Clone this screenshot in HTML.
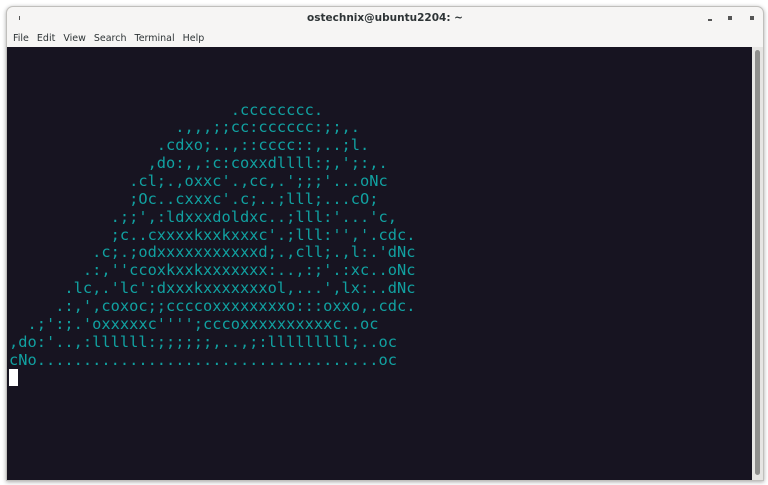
<!DOCTYPE html>
<html><head><meta charset="utf-8"><style>
html,body{margin:0;padding:0;}
body{width:768px;height:485px;background:#fff;position:relative;overflow:hidden;font-family:"DejaVu Sans","Liberation Sans",sans-serif;}
.win{position:absolute;left:6px;top:6px;width:756px;height:473px;background:#f6f5f4;border:1px solid #c0bfbc;border-radius:7px 7px 0 0;box-shadow:0 1px 4px rgba(0,0,0,0.35);overflow:hidden;}
.title{position:absolute;left:0;top:0;width:100%;height:24px;text-align:center;font-size:10.5px;font-weight:bold;line-height:22px;color:#2e3436;}
.menu{position:absolute;left:6px;top:25px;font-size:9.5px;color:#2e3436;line-height:14px;}
.menu span{margin-right:8px;}
.term{position:absolute;left:0;top:40px;width:745px;height:433px;background:#171421;}
.sb{position:absolute;left:745px;top:40px;width:11px;height:433px;background:#e6e5e3;}
.thumb{position:absolute;left:3px;top:3px;width:5px;height:425px;background:#8f8f8d;border-radius:3px;}
pre{position:absolute;left:2px;top:1px;margin:0;font-family:"DejaVu Sans Mono","Liberation Mono",monospace;font-size:15.35px;line-height:17.86px;color:#11a1a1;}
.cur{display:inline-block;width:9px;height:17px;background:#fff;vertical-align:top;}
.btn{position:absolute;top:9px;width:4px;height:4px;background:#555;}
</style></head><body>
<div class="win">
<div class="title">ostechnix@ubuntu2204: ~</div>
<div style="position:absolute;left:12px;top:9px;width:1px;height:4px;background:#555"></div>
<div class="btn" style="left:701px;top:12px;height:2px"></div>
<div class="btn" style="left:721px"></div>
<div class="btn" style="left:743px"></div>
<div class="menu"><span>File</span><span>Edit</span><span>View</span><span>Search</span><span>Terminal</span><span>Help</span></div>
<div class="term"><pre>



                        .cccccccc.
                  .,,,;;cc:cccccc:;;,.
                .cdxo;..,::cccc::,..;l.
               ,do:,,:c:coxxdllll:;,';:,.
             .cl;.,oxxc'.,cc,.';;;'...oNc
             ;Oc..cxxxc'.c;..;lll;...cO;
           .;;',:ldxxxdoldxc..;lll:'...'c,
           ;c..cxxxxkxxkxxxc'.;lll:'','.cdc.
         .c;.;odxxxxxxxxxxxd;.,cll;.,l:.'dNc
        .:,''ccoxkxxkxxxxxxx:..,:;'.:xc..oNc
      .lc,.'lc':dxxxkxxxxxxxol,...',lx:..dNc
     .:,',coxoc;;ccccoxxxxxxxxo:::oxxo,.cdc.
  .;':;.'oxxxxxc'''';cccoxxxxxxxxxxc..oc
,do:'..,:llllll:;;;;;;,..,;:lllllllll;..oc
cNo.....................................oc
<span class="cur"></span></pre></div>
<div class="sb"><div class="thumb"></div></div>
</div>
</body></html>
